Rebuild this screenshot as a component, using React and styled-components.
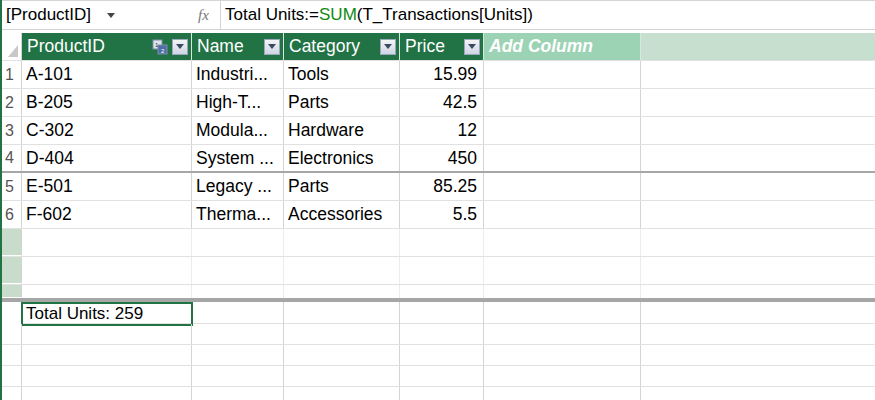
import styled, { createGlobalStyle } from "styled-components"

const Global = createGlobalStyle`
  body { margin: 0; background: #fff; font-family: "Liberation Sans", Arial, sans-serif; overflow: hidden; }
`

const COLS = "20px 170px 92px 116px 84px 157px 1fr"

const Page = styled.div`
  width: 875px;
  height: 400px;
  border-left: 2px solid #217346;
  box-sizing: border-box;
`

const FormulaBar = styled.div`
  display: flex;
  align-items: center;
  height: 28px;
  border-top: 1px solid #d4d4d4;
  border-bottom: 1px solid #d4d4d4;
  font-size: 17px;
  color: #000;
`

const NameBox = styled.div`
  width: 192px;
  padding-left: 4px;
  display: flex;
  align-items: center;
  gap: 16px;
`

const Fx = styled.div`
  width: 22px;
  font-family: "Liberation Serif", serif;
  font-style: italic;
  color: #777;
  font-size: 15px;
  border-right: 1px solid #d4d4d4;
  margin-right: 4px;
  height: 28px;
  line-height: 28px;
`

const Func = styled.span`
  color: #108a10;
`

const Gap = styled.div`
  height: 3px;
`

const Row = styled.div`
  display: grid;
  grid-template-columns: ${COLS};
  height: ${p => p.$h}px;
  border-bottom: ${p => p.$thick ? "2px solid #a6a6a6" : "1px solid #e1e1e1"};
  box-sizing: border-box;
  font-size: 17.5px;
`

const Cell = styled.div`
  border-right: 1px solid ${p => p.$light ? "#ececec" : "#d4d4d4"};
  padding: 0 6px 0 4px;
  display: flex;
  align-items: center;
  justify-content: ${p => p.$right ? "flex-end" : "flex-start"};
  white-space: nowrap;
  overflow: hidden;
  &:last-child { border-right: none; }
`

const RowNum = styled.div`
  background: ${p => p.$green ? "#c8dccb" : "#fff"};
  color: #555;
  font-size: 16px;
  display: flex;
  align-items: center;
  padding-left: 3px;
  border-right: 1px solid #d4d4d4;
  border-bottom: ${p => p.$green ? "1px solid #fff" : "none"};
`

const Head = styled.div`
  background: ${p => p.$add ? "#9dd3b5" : p.$rest ? "#c6dfcf" : "#217346"};
  color: #fff;
  font-style: ${p => p.$add ? "italic" : "normal"};
  font-weight: ${p => p.$add ? "bold" : "normal"};
  display: flex;
  align-items: center;
  justify-content: space-between;
  padding: 0 3px 0 5px;
  border-right: 1px solid ${p => p.$rest ? "transparent" : "#d9e8de"};
  font-size: 17.5px;
`

const Corner = styled.div`
  background: #fff;
  display: flex;
  align-items: flex-end;
  justify-content: flex-end;
  padding: 3px;
  border-right: 1px solid #d4d4d4;
`

const Drop = styled.span`
  width: 16px;
  height: 16px;
  background: linear-gradient(#f4f4f4, #cfd6e4);
  border: 1px solid #9aa8bd;
  box-sizing: border-box;
  display: flex;
  align-items: center;
  justify-content: center;
`

const Icons = styled.span`
  display: flex;
  gap: 4px;
  align-items: center;
`

const Selected = styled.div`
  border: 2px solid #217346;
  margin: 0 -1px 0 -1px;
  padding: 0 3px;
  display: flex;
  align-items: center;
  font-size: 17px;
`

const Arrow = () => (
  <Drop>
    <svg width="8" height="5" viewBox="0 0 8 5"><path d="M0 0h8L4 5z" fill="#3a4a66" /></svg>
  </Drop>
)

const SortIcon = () => (
  <svg width="16" height="16" viewBox="0 0 16 16">
    <rect x="1" y="1" width="9" height="9" fill="#dde4ee" stroke="#7f8fa8" />
    <rect x="6" y="6" width="9" height="9" fill="#4f6fa8" stroke="#7f8fa8" />
    <text x="3" y="8" fontSize="6" fill="#333">1</text>
    <text x="9" y="14" fontSize="6" fill="#fff">2</text>
  </svg>
)

const data = [
  ["A-101", "Industri...", "Tools", "15.99"],
  ["B-205", "High-T...", "Parts", "42.5"],
  ["C-302", "Modula...", "Hardware", "12"],
  ["D-404", "System ...", "Electronics", "450"],
  ["E-501", "Legacy ...", "Parts", "85.25"],
  ["F-602", "Therma...", "Accessories", "5.5"],
]

const EmptyCells = ({ light }) => [1, 2, 3, 4, 5, 6].map(i => <Cell key={i} $light={light} />)

export default function App() {
  return (
    <Page>
      <Global />
      <FormulaBar>
        <NameBox>[ProductID] <svg width="8" height="5" viewBox="0 0 8 5"><path d="M0 0h8L4 5z" fill="#444" /></svg></NameBox>
        <Fx>fx</Fx>
        <span>Total Units:=<Func>SUM</Func>(T_Transactions[Units])</span>
      </FormulaBar>
      <Gap />
      <Row $h={28}>
        <Corner>
          <svg width="10" height="12" viewBox="0 0 10 12"><path d="M10 0v12H0z" fill="#c8c8c8" /></svg>
        </Corner>
        <Head>ProductID<Icons><SortIcon /><Arrow /></Icons></Head>
        <Head>Name<Arrow /></Head>
        <Head>Category<Arrow /></Head>
        <Head>Price<Arrow /></Head>
        <Head $add>Add Column</Head>
        <Head $rest />
      </Row>
      {data.map((r, i) => (
        <Row key={i} $h={28} $thick={i === 3}>
          <RowNum>{i + 1}</RowNum>
          <Cell>{r[0]}</Cell>
          <Cell>{r[1]}</Cell>
          <Cell>{r[2]}</Cell>
          <Cell $right>{r[3]}</Cell>
          <Cell />
          <Cell />
        </Row>
      ))}
      <Row $h={28}><RowNum $green /><EmptyCells light /></Row>
      <Row $h={28}><RowNum $green /><EmptyCells light /></Row>
      <Row $h={17} style={{ borderBottom: "4px solid #a6a6a6" }}><RowNum $green /><EmptyCells light /></Row>
      <Row $h={22}>
        <RowNum />
        <Selected>Total Units: 259</Selected>
        <Cell /><Cell /><Cell /><Cell /><Cell />
      </Row>
      {[1, 2, 3, 4].map(i => (
        <Row key={i} $h={21}><RowNum /><EmptyCells /></Row>
      ))}
    </Page>
  )
}
